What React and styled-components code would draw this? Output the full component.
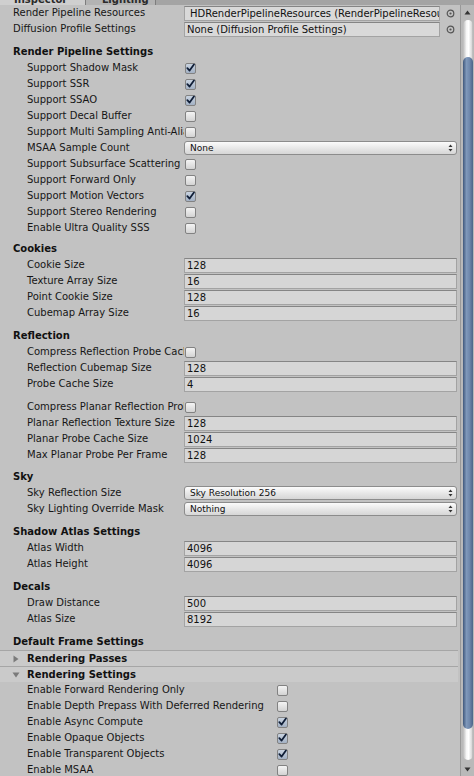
import React from 'react';
import styled, { createGlobalStyle } from 'styled-components';

const GlobalStyle = createGlobalStyle`
  html, body {
    margin: 0;
    padding: 0;
    background: #c2c2c2;
  }
  body {
    font-family: "DejaVu Sans", Verdana, sans-serif;
    font-size: 10px;
    color: #161616;
  }
`;

const Window = styled.div`
  width: 474px;
  height: 776px;
  display: flex;
  flex-direction: column;
  overflow: hidden;
  background: #c2c2c2;
`;

const TabBar = styled.div`
  height: 5px;
  flex: none;
  display: flex;
  background: #a4a4a4;
  overflow: hidden;
`;

const Tab = styled.div`
  width: ${p => p.w}px;
  height: 5px;
  padding-left: ${p => p.pad}px;
  box-sizing: border-box;
  background: ${p => (p.active ? '#cfcfcf' : '#b3b3b3')};
  border-right: 1px solid #7d7d7d;
  overflow: hidden;
`;

const TabLabel = styled.div`
  margin-top: -6px;
  line-height: 12px;
  font-weight: bold;
  color: #2a2a2a;
  white-space: nowrap;
`;

const Body = styled.div`
  flex: 1;
  display: flex;
  min-height: 0;
`;

const Content = styled.div`
  flex: 1;
  display: flex;
  flex-direction: column;
  min-width: 0;
`;

const Row = styled.div`
  flex: none;
  display: grid;
  grid-template-columns: ${p => p.labelWidth}px 1fr ${p => (p.picker ? '20px' : '3px')};
  height: 16px;
  align-items: center;
  margin-top: ${p => p.gap || 0}px;
`;

const Label = styled.div`
  padding-left: ${p => p.indent}px;
  white-space: nowrap;
  overflow: hidden;
  line-height: 16px;
`;

const Header = styled.div`
  flex: none;
  height: 16px;
  line-height: 16px;
  padding-left: 13px;
  font-weight: bold;
  color: #111;
  margin-top: ${p => p.gap}px;
`;

const Field = styled.div`
  height: 15px;
  box-sizing: border-box;
  border: 1px solid #a3a3a3;
  border-top-color: #858585;
  background: #d6d6d6;
  padding-left: 2px;
  line-height: 13px;
  color: #111;
  white-space: nowrap;
  overflow: hidden;
`;

const ObjectField = styled(Field)`
  display: flex;
  align-items: center;
  gap: 3px;
  background: #d9d9d9;
`;

const Dropdown = styled.div`
  height: 14px;
  box-sizing: border-box;
  border: 1px solid #8c8c8c;
  border-radius: 3px;
  background: linear-gradient(#fbfbfb, #e4e4e4 60%, #d6d6d6);
  display: flex;
  align-items: center;
  justify-content: space-between;
  padding: 0 3px 0 5px;
  font-size: 9px;
  color: #111;
`;

const Box = styled.div`
  width: 11px;
  height: 11px;
  box-sizing: border-box;
  margin-left: 1px;
  border: 1px solid #828282;
  border-radius: 2px;
  background: ${p =>
    p.on
      ? 'linear-gradient(#c9d3e0, #a3b1c4)'
      : 'linear-gradient(#f4f4f4, #d3d3d3)'};
  display: flex;
  align-items: center;
  justify-content: center;
`;

const Picker = styled.div`
  display: flex;
  justify-content: center;
  align-items: center;
`;

const Foldout = styled.div`
  flex: none;
  height: 16px;
  box-sizing: border-box;
  display: flex;
  align-items: center;
  margin-right: 2px;
  border-top: 1px solid #a6a6a6;
  background: #cacaca;
  font-weight: bold;
  color: #111;
`;

const Arrow = styled.div`
  width: 27px;
  display: flex;
  justify-content: center;
  padding-left: 4px;
  box-sizing: border-box;
`;

const Scrollbar = styled.div`
  width: 14px;
  flex: none;
  display: flex;
  flex-direction: column;
  align-items: center;
  background: #b9b9b9;
  border-left: 1px solid #999;
  box-sizing: border-box;
`;

const ScrollButton = styled.div`
  height: 14px;
  flex: none;
  display: flex;
  align-items: center;
  justify-content: center;
`;

const Track = styled.div`
  flex: 1;
  width: 10px;
  margin: 1px 0 2px;
  border-radius: 5px;
  background: linear-gradient(90deg, #b8b8b8, #f6f6f6 35%, #ffffff 55%, #dcdcdc 85%, #b0b0b0);
  display: flex;
  flex-direction: column;
`;

const Thumb = styled.div`
  margin-top: 37px;
  height: 672px;
  border-radius: 5px;
  background: linear-gradient(90deg, #40587c, #7f98ba 35%, #6f88ac 65%, #4b6488);
`;

const Check = () => (
  <svg width="10" height="10" viewBox="0 0 10 10">
    <path d="M1.5 5.2 L4 7.8 L8.8 1.2" fill="none" stroke="#0f1d36" strokeWidth="2" strokeLinecap="round" strokeLinejoin="round" />
  </svg>
);

const UpDown = () => (
  <svg width="5" height="8" viewBox="0 0 5 8">
    <path d="M2.5 0.5 L4.5 3 L0.5 3 Z M0.5 5 L4.5 5 L2.5 7.5 Z" fill="#333" />
  </svg>
);

const PickerIcon = () => (
  <svg width="9" height="9" viewBox="0 0 9 9">
    <circle cx="4.5" cy="4.5" r="3.3" fill="none" stroke="#555" strokeWidth="1.2" />
    <circle cx="4.5" cy="4.5" r="1.1" fill="#555" />
  </svg>
);

const AssetIcon = () => (
  <svg width="10" height="10" viewBox="0 0 10 10">
    <rect x="0.5" y="0.5" width="9" height="9" fill="#8f959c" stroke="#5d636a" />
    <rect x="2" y="2" width="6" height="6" fill="#b7bdc4" />
  </svg>
);

const FoldArrow = ({ open }) => (
  <svg width="8" height="8" viewBox="0 0 8 8">
    {open ? <path d="M0.5 1.5 L7.5 1.5 L4 6.5 Z" fill="#7a7a7a" /> : <path d="M1.5 0.5 L6.5 4 L1.5 7.5 Z" fill="#7a7a7a" />}
  </svg>
);

const sections = [
  {
    title: 'Render Pipeline Settings',
    gap: 7,
    rows: [
      { label: 'Support Shadow Mask', check: true },
      { label: 'Support SSR', check: true },
      { label: 'Support SSAO', check: true },
      { label: 'Support Decal Buffer', check: false },
      { label: 'Support Multi Sampling Anti-Aliasing', check: false },
      { label: 'MSAA Sample Count', drop: 'None' },
      { label: 'Support Subsurface Scattering', check: false },
      { label: 'Support Forward Only', check: false },
      { label: 'Support Motion Vectors', check: true },
      { label: 'Support Stereo Rendering', check: false },
      { label: 'Enable Ultra Quality SSS', check: false },
    ],
  },
  {
    title: 'Cookies',
    gap: 5,
    rows: [
      { label: 'Cookie Size', value: '128' },
      { label: 'Texture Array Size', value: '16' },
      { label: 'Point Cookie Size', value: '128' },
      { label: 'Cubemap Array Size', value: '16' },
    ],
  },
  {
    title: 'Reflection',
    gap: 7,
    rows: [
      { label: 'Compress Reflection Probe Cache', check: false },
      { label: 'Reflection Cubemap Size', value: '128' },
      { label: 'Probe Cache Size', value: '4' },
      { label: 'Compress Planar Reflection Probe Cache', check: false, gap: 7 },
      { label: 'Planar Reflection Texture Size', value: '128' },
      { label: 'Planar Probe Cache Size', value: '1024' },
      { label: 'Max Planar Probe Per Frame', value: '128' },
    ],
  },
  {
    title: 'Sky',
    gap: 6,
    rows: [
      { label: 'Sky Reflection Size', drop: 'Sky Resolution 256' },
      { label: 'Sky Lighting Override Mask', drop: 'Nothing' },
    ],
  },
  {
    title: 'Shadow Atlas Settings',
    gap: 7,
    rows: [
      { label: 'Atlas Width', value: '4096' },
      { label: 'Atlas Height', value: '4096' },
    ],
  },
  {
    title: 'Decals',
    gap: 7,
    rows: [
      { label: 'Draw Distance', value: '500' },
      { label: 'Atlas Size', value: '8192' },
    ],
  },
];

const renderingSettings = [
  { label: 'Enable Forward Rendering Only', check: false },
  { label: 'Enable Depth Prepass With Deferred Rendering', check: false },
  { label: 'Enable Async Compute', check: true },
  { label: 'Enable Opaque Objects', check: true },
  { label: 'Enable Transparent Objects', check: true },
  { label: 'Enable MSAA', check: false },
];

function PropRow({ row, indent = 27, labelWidth = 184 }) {
  let control;
  if (row.check !== undefined) {
    control = <Box on={row.check}>{row.check && <Check />}</Box>;
  } else if (row.drop !== undefined) {
    control = (
      <Dropdown>
        <span>{row.drop}</span>
        <UpDown />
      </Dropdown>
    );
  } else {
    control = <Field>{row.value}</Field>;
  }
  return (
    <Row labelWidth={labelWidth} gap={row.gap}>
      <Label indent={indent}>{row.label}</Label>
      {control}
      <span />
    </Row>
  );
}

export default function App() {
  return (
    <Window>
      <GlobalStyle />
      <TabBar>
        <Tab w={86} pad={14} active>
          <TabLabel>Inspector</TabLabel>
        </Tab>
        <Tab w={70} pad={16}>
          <TabLabel>Lighting</TabLabel>
        </Tab>
      </TabBar>
      <Body>
        <Content>
          <Row labelWidth={184} picker>
            <Label indent={13}>Render Pipeline Resources</Label>
            <ObjectField>
              <AssetIcon />
              <span>HDRenderPipelineResources (RenderPipelineResources)</span>
            </ObjectField>
            <Picker>
              <PickerIcon />
            </Picker>
          </Row>
          <Row labelWidth={184} picker>
            <Label indent={13}>Diffusion Profile Settings</Label>
            <ObjectField>None (Diffusion Profile Settings)</ObjectField>
            <Picker>
              <PickerIcon />
            </Picker>
          </Row>

          {sections.map(s => (
            <React.Fragment key={s.title}>
              <Header gap={s.gap}>{s.title}</Header>
              {s.rows.map(r => (
                <PropRow key={r.label} row={r} />
              ))}
            </React.Fragment>
          ))}

          <Header gap={7}>Default Frame Settings</Header>
          <Foldout>
            <Arrow>
              <FoldArrow />
            </Arrow>
            Rendering Passes
          </Foldout>
          <Foldout>
            <Arrow>
              <FoldArrow open />
            </Arrow>
            Rendering Settings
          </Foldout>
          {renderingSettings.map(r => (
            <PropRow key={r.label} row={r} labelWidth={276} />
          ))}
        </Content>
        <Scrollbar>
          <ScrollButton>
            <svg width="7" height="5" viewBox="0 0 7 5">
              <path d="M3.5 0.5 L6.5 4.5 L0.5 4.5 Z" fill="#333" />
            </svg>
          </ScrollButton>
          <Track>
            <Thumb />
          </Track>
          <ScrollButton>
            <svg width="7" height="5" viewBox="0 0 7 5">
              <path d="M0.5 0.5 L6.5 0.5 L3.5 4.5 Z" fill="#333" />
            </svg>
          </ScrollButton>
        </Scrollbar>
      </Body>
    </Window>
  );
}
